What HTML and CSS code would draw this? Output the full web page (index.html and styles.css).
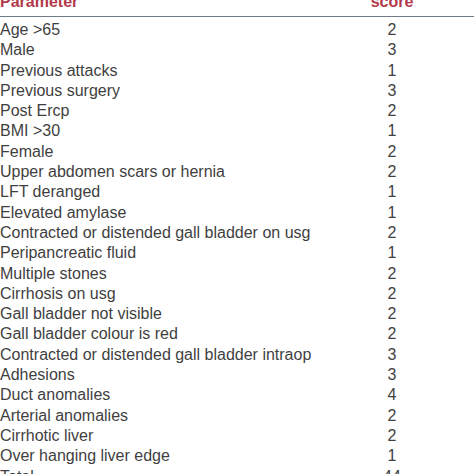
FILE: index.html
```html
<!DOCTYPE html>
<html>
<head>
<meta charset="utf-8">
<link rel="stylesheet" href="styles.css">
</head>
<body>
<div class="table">
  <div class="head">
    <div class="param">Parameter</div>
    <div class="score">score</div>
  </div>
  <div class="body">
    <div class="row"><span class="param">Age &gt;65</span><span class="score">2</span></div>
    <div class="row"><span class="param">Male</span><span class="score">3</span></div>
    <div class="row"><span class="param">Previous attacks</span><span class="score">1</span></div>
    <div class="row"><span class="param">Previous surgery</span><span class="score">3</span></div>
    <div class="row"><span class="param">Post Ercp</span><span class="score">2</span></div>
    <div class="row"><span class="param">BMI &gt;30</span><span class="score">1</span></div>
    <div class="row"><span class="param">Female</span><span class="score">2</span></div>
    <div class="row"><span class="param">Upper abdomen scars or hernia</span><span class="score">2</span></div>
    <div class="row"><span class="param">LFT deranged</span><span class="score">1</span></div>
    <div class="row"><span class="param">Elevated amylase</span><span class="score">1</span></div>
    <div class="row"><span class="param">Contracted or distended gall bladder on usg</span><span class="score">2</span></div>
    <div class="row"><span class="param">Peripancreatic fluid</span><span class="score">1</span></div>
    <div class="row"><span class="param">Multiple stones</span><span class="score">2</span></div>
    <div class="row"><span class="param">Cirrhosis on usg</span><span class="score">2</span></div>
    <div class="row"><span class="param">Gall bladder not visible</span><span class="score">2</span></div>
    <div class="row"><span class="param">Gall bladder colour is red</span><span class="score">2</span></div>
    <div class="row"><span class="param">Contracted or distended gall bladder intraop</span><span class="score">3</span></div>
    <div class="row"><span class="param">Adhesions</span><span class="score">3</span></div>
    <div class="row"><span class="param">Duct anomalies</span><span class="score">4</span></div>
    <div class="row"><span class="param">Arterial anomalies</span><span class="score">2</span></div>
    <div class="row"><span class="param">Cirrhotic liver</span><span class="score">2</span></div>
    <div class="row"><span class="param">Over hanging liver edge</span><span class="score">1</span></div>
    <div class="row"><span class="param">Total</span><span class="score">44</span></div>
  </div>
</div>
</body>
</html>
```

FILE: styles.css
```css
html, body {
  margin: 0;
  padding: 0;
  background: #ffffff;
  overflow: hidden;
}
.table {
  width: 474px;
  font-family: "Liberation Sans", Arial, sans-serif;
  font-size: 16px;
  color: #3f3f3f;
  margin-top: -6.5px;
}
.head {
  display: grid;
  grid-template-columns: 1fr 80px;
  padding-right: 42px;
  height: 22.5px;
  border-bottom: 1px solid #6e7b88;
  font-weight: bold;
  color: #b23a4a;
  line-height: 16px;
}
.head .score {
  text-align: center;
}
.body {
  padding-top: 3px;
}
.row {
  display: grid;
  grid-template-columns: 1fr 80px;
  padding-right: 42px;
  height: 20.3px;
  line-height: 20.3px;
}
.row .score {
  text-align: center;
}
.param {
  white-space: nowrap;
}
```
